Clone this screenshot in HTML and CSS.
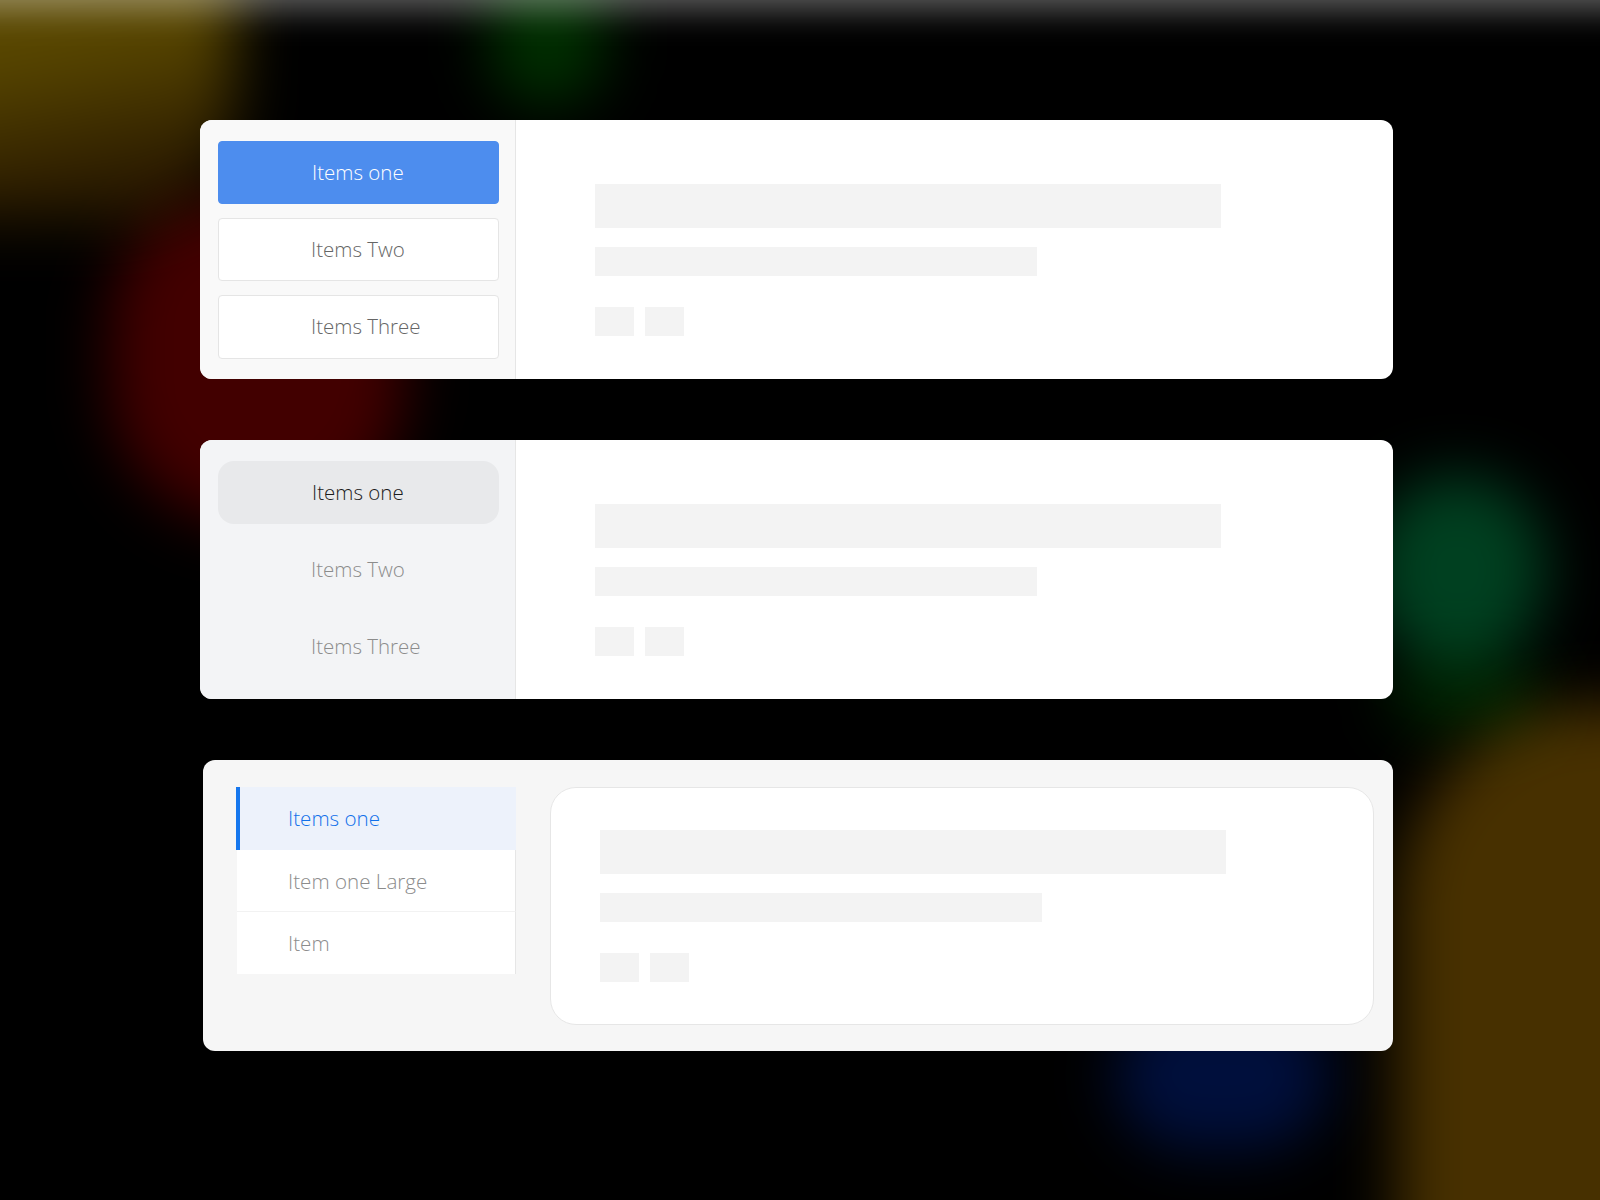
FILE: index.html
```html
<!DOCTYPE html>
<html lang="en">
<head>
    <meta charset="UTF-8">
    <meta name="viewport" content="width=device-width, initial-scale=1.0">
    <title>Side tabs</title>
    <link rel="stylesheet" href="styles.css">
</head>
<body>
    <!-- Blurred backdrop -->
    <div class="backdrop">
        <div class="blob blob-yellow"></div>
        <div class="blob blob-red"></div>
        <div class="blob blob-green"></div>
        <div class="blob blob-teal"></div>
        <div class="blob blob-lime"></div>
        <div class="blob blob-amber"></div>
        <div class="blob blob-blue"></div>
        <div class="blob blob-top"></div>
    </div>

    <div class="main-container">
        <!-- Button tabs -->
        <div class="card card-buttons">
            <div class="side">
                <div class="tab tab-active">Items one</div>
                <div class="tab">Items Two</div>
                <div class="tab">Items Three</div>
            </div>
            <div class="content">
                <div class="bar bar-large"></div>
                <div class="bar bar-medium"></div>
                <div class="bar-row">
                    <div class="bar bar-small"></div>
                    <div class="bar bar-small"></div>
                </div>
            </div>
        </div>

        <!-- Pill tabs -->
        <div class="card card-pills">
            <div class="side">
                <div class="tab tab-active">Items one</div>
                <div class="tab">Items Two</div>
                <div class="tab">Items Three</div>
            </div>
            <div class="content">
                <div class="bar bar-large"></div>
                <div class="bar bar-medium"></div>
                <div class="bar-row">
                    <div class="bar bar-small"></div>
                    <div class="bar bar-small"></div>
                </div>
            </div>
        </div>

        <!-- List tabs -->
        <div class="card card-list">
            <div class="list">
                <div class="list-item list-item-active">Items one</div>
                <div class="list-item">Item one Large</div>
                <div class="list-item">Item</div>
            </div>
            <div class="panel">
                <div class="bar bar-large"></div>
                <div class="bar bar-medium"></div>
                <div class="bar-row">
                    <div class="bar bar-small"></div>
                    <div class="bar bar-small"></div>
                </div>
            </div>
        </div>
    </div>
</body>
</html>
```

FILE: styles.css
```css
html, body {
    height: 100%;
}

body {
    margin: 0;
    background-color: #000;
    font-family: "Open Sans", "Noto Sans", sans-serif;
    font-weight: 300;
    overflow: hidden;
}

/* Backdrop */
.backdrop {
    position: absolute;
    top: 0;
    left: 0;
    width: 1600px;
    height: 1200px;
    overflow: hidden;
}

.blob {
    position: absolute;
    filter: blur(30px);
    mix-blend-mode: screen;
}

.blob-top {
    top: -50px;
    left: -40px;
    width: 1680px;
    height: 60px;
    background: #5c5c5c;
    filter: blur(16px);
}

.blob-yellow {
    top: -100px;
    left: -100px;
    width: 335px;
    height: 320px;
    border-radius: 0 0 120px 60px;
    background: linear-gradient(170deg, #5a4800 45%, #2a1a00 85%);
}

.blob-red {
    top: 200px;
    left: 110px;
    width: 295px;
    height: 325px;
    border-radius: 120px 40px 140px 140px;
    background: #420000;
}

.blob-green {
    top: -60px;
    left: 490px;
    width: 115px;
    height: 165px;
    border-radius: 50px;
    background: #002e00;
}

.blob-teal {
    top: 475px;
    left: 1370px;
    width: 175px;
    height: 190px;
    border-radius: 90px;
    background: #004020;
}

.blob-lime {
    top: 660px;
    left: 1390px;
    width: 150px;
    height: 70px;
    border-radius: 40px;
    background: #002200;
}

.blob-amber {
    top: 705px;
    left: 1398px;
    width: 330px;
    height: 590px;
    border-radius: 200px 0 0 0;
    background: #473000;
}

.blob-blue {
    top: 1000px;
    left: 1115px;
    width: 215px;
    height: 150px;
    border-radius: 90px;
    background: #000f3c;
}

/* Cards */
.main-container {
    position: relative;
    display: flex;
    flex-direction: column;
    gap: 61px;
    padding: 120px 0 0 200px;
}

.card {
    display: flex;
    width: 1193px;
    height: 259px;
    background-color: #fff;
    border-radius: 12px;
    overflow: hidden;
}

.side {
    display: flex;
    flex-direction: column;
    gap: 14px;
    box-sizing: border-box;
    width: 316px;
    padding: 21px 16px 0 18px;
    border-right: 1px solid #e6e6e6;
}

.tab {
    box-sizing: border-box;
    height: 63px;
    padding-left: 92px;
    line-height: 61px;
    font-size: 20.5px;
    border: 1px solid transparent;
}

.tab:last-child {
    height: 64px;
}

.tab-active {
    padding-left: 93px;
}

.card-buttons .side {
    background-color: #f9f9f9;
}

.card-buttons .tab {
    background-color: #fff;
    border-color: #e5e5e5;
    border-radius: 4px;
    color: #666;
}

.card-buttons .tab-active {
    background-color: #4d8dee;
    border-color: #4d8dee;
    color: #fff;
}

.card-pills .side {
    background-color: #f3f4f6;
}

.card-pills .tab {
    color: #8c8c8c;
}

.card-pills .tab-active {
    background-color: #e8e9eb;
    border-radius: 16px;
    color: #1c1c1c;
}

/* Skeleton */
.content {
    padding: 64px 0 0 79px;
}

.bar {
    background-color: #f3f3f3;
}

.bar-large {
    width: 626px;
    height: 44px;
}

.bar-medium {
    width: 442px;
    height: 29px;
    margin-top: 19px;
}

.bar-row {
    display: flex;
    gap: 11px;
    margin-top: 31px;
}

.bar-small {
    width: 39px;
    height: 29px;
}

/* List layout */
.card-list {
    width: 1190px;
    height: 291px;
    margin-left: 3px;
    padding: 27px 19px 0 33px;
    box-sizing: border-box;
    background-color: #f6f6f6;
}

.list {
    width: 280px;
    height: 187px;
    flex-shrink: 0;
}

.list-item {
    box-sizing: border-box;
    height: 62px;
    padding-left: 51px;
    margin-left: 1px;
    line-height: 63px;
    font-size: 20.6px;
    color: #8c8c8c;
    background-color: #fff;
    border-right: 1px solid #e6e6e6;
    border-bottom: 1px solid #f2f2f2;
}

.list-item:last-child {
    border-bottom: none;
}

.list-item-active {
    height: 63px;
    margin-left: 0;
    padding-left: 48px;
    line-height: 62px;
    color: #1070ea;
    background-color: #edf2fb;
    border-left: 4px solid #1677ee;
    border-right: none;
    border-bottom: none;
}

.panel {
    box-sizing: border-box;
    width: 824px;
    height: 238px;
    margin-left: 34px;
    padding: 42px 0 0 49px;
    background-color: #fff;
    border: 1px solid #e6e6e6;
    border-radius: 26px;
}
```
